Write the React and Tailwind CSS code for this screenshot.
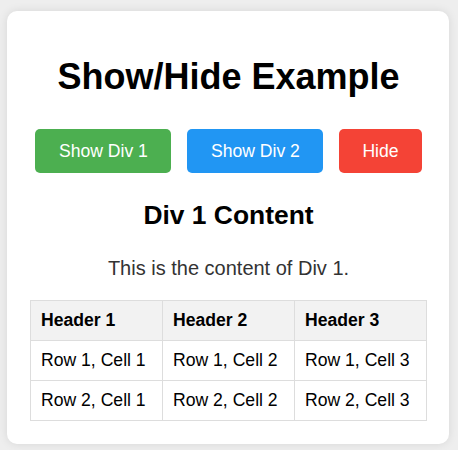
export default function App() {
  const rows = [
    ['Row 1, Cell 1', 'Row 1, Cell 2', 'Row 1, Cell 3'],
    ['Row 2, Cell 1', 'Row 2, Cell 2', 'Row 2, Cell 3'],
  ];

  return (
    <div className="min-h-screen bg-[#eeeeee] pt-[11px] font-['Liberation_Sans',Arial,sans-serif]">
      <div className="ml-[7px] w-[442px] rounded-[10px] bg-white pt-[45px] pb-[23px] pl-[23px] pr-[22px] shadow-[0_0_10px_rgba(0,0,0,0.1)]">
        <h1 className="text-center text-[36px] font-bold leading-[41px] text-black">Show/Hide Example</h1>

        <div className="mt-[32px] flex justify-center gap-4">
          <button className="rounded-[5px] bg-[#4caf50] px-[23.5px] py-3 text-[17.6px] leading-[20px] text-white">Show Div 1</button>
          <button className="rounded-[5px] bg-[#2196f3] px-[23.5px] py-3 text-[17.6px] leading-[20px] text-white">Show Div 2</button>
          <button className="rounded-[5px] bg-[#f44336] px-[23px] py-3 text-[17.6px] leading-[20px] text-white">Hide</button>
        </div>

        <h2 className="mt-[27px] text-center text-[26.4px] font-bold leading-[30px] text-black">Div 1 Content</h2>
        <p className="mt-[26.6px] text-center text-[20px] leading-[23px] text-[#333333]">This is the content of Div 1.</p>

        <table className="mt-[20.4px] w-full table-fixed border-collapse text-[17.6px] leading-[19px] text-black">
          <thead>
            <tr className="bg-[#f2f2f2]">
              <th className="border border-[#dddddd] px-[10px] py-[10px] text-left font-bold">Header 1</th>
              <th className="border border-[#dddddd] px-[10px] py-[10px] text-left font-bold">Header 2</th>
              <th className="border border-[#dddddd] px-[10px] py-[10px] text-left font-bold">Header 3</th>
            </tr>
          </thead>
          <tbody>
            {rows.map((row, i) => (
              <tr key={i}>
                {row.map((cell) => (
                  <td key={cell} className="border border-[#dddddd] px-[10px] py-[10px]">{cell}</td>
                ))}
              </tr>
            ))}
          </tbody>
        </table>
      </div>
    </div>
  );
}
